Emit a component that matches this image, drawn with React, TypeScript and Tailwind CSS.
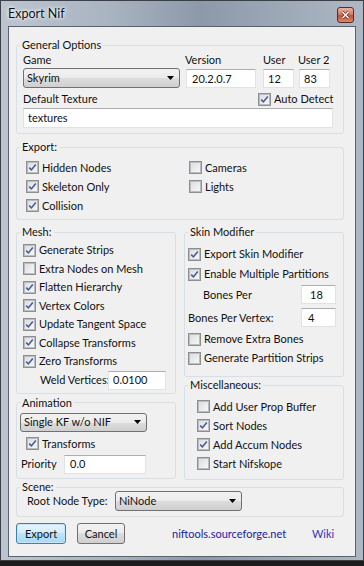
import React from "react";

function Box({ checked }: { checked?: boolean }) {
  return (
    <span className="flex h-[13px] w-[13px] shrink-0 items-center justify-center border border-[#8e8f8f] bg-white">
      <span className="flex h-[11px] w-[11px] items-center justify-center border border-[#b9bcc1] bg-[linear-gradient(135deg,#dcdee2,#f7f7f7)]">
        {checked ? (
          <svg width="9" height="9" viewBox="0 0 9 9">
            <path d="M1.2 4.6 L3.4 6.9 L7.8 1.4" fill="none" stroke="#4a5c94" strokeWidth="1.6" />
          </svg>
        ) : null}
      </span>
    </span>
  );
}

function Check({ checked, label, className = "" }: { checked?: boolean; label: string; className?: string }) {
  return (
    <div className={`flex items-center gap-[3px] ${className}`}>
      <Box checked={checked} />
      <span className="whitespace-nowrap">{label}</span>
    </div>
  );
}

function Combo({ value, className = "" }: { value: string; className?: string }) {
  return (
    <div
      className={`flex shrink-0 items-center justify-between rounded-[3px] border border-[#707070] bg-[linear-gradient(#f2f2f2,#ebebeb_50%,#dddddd_50%,#cfcfcf)] pl-[3px] pr-[5px] ${className}`}
    >
      <span className="whitespace-nowrap">{value}</span>
      <svg width="7" height="4" viewBox="0 0 7 4">
        <path d="M0 0H7L3.5 4Z" fill="#000" />
      </svg>
    </div>
  );
}

function Field({ value, className = "" }: { value: string; className?: string }) {
  return (
    <div
      className={`flex shrink-0 items-center border border-[#dfe3e8] border-t-[#abadb3] bg-white ${className}`}
    >
      {value}
    </div>
  );
}

function Group({
  label,
  className = "",
  inner = "",
  children,
}: {
  label: string;
  className?: string;
  inner?: string;
  children: React.ReactNode;
}) {
  return (
    <fieldset className={`rounded-[3px] border border-[#d5dfe5] ${className}`}>
      <legend className="ml-[3px] px-[2px] leading-[14px]">{label}</legend>
      <div className={inner}>{children}</div>
    </fieldset>
  );
}

export default function App() {
  return (
    <div className="h-[566px] w-[364px] bg-[#1c1c1c] font-[Lato,'Liberation_Sans',sans-serif] text-[11px] leading-[14px] text-[#111]">
      <div className="flex h-[561px] flex-col border border-[#3b4047] bg-[linear-gradient(90deg,#bcc5cf_0%,#a9b4c1_30%,#8c99a9_55%,#9eaab8_80%,#aeb8c4_100%)] px-[7px] pb-[3px]">
        <div className="flex h-[25px] shrink-0 items-center justify-between">
          <span className="text-[12.5px] [text-shadow:0_0_5px_#ffffff,0_0_3px_#ffffff]">Export Nif</span>
          <div className="mr-[2px] mt-[2px] flex h-[16px] w-[17px] items-center justify-center rounded-[3px] border border-[#5c2b22] bg-[linear-gradient(#eab0a2,#d47b66_45%,#c2503c_55%,#d88a6c)]">
            <svg width="9" height="8" viewBox="0 0 9 8">
              <path d="M1.5 1 L7.5 7 M7.5 1 L1.5 7" stroke="#5a1e16" strokeWidth="2.6" />
              <path d="M1.5 1 L7.5 7 M7.5 1 L1.5 7" stroke="#ffffff" strokeWidth="1.5" />
            </svg>
          </div>
        </div>

        <div className="flex flex-1 flex-col border border-[#59626d] bg-[#f0f0f0] pl-[7px] pt-[11px]">
          <Group label="General Options" className="w-[328px]" inner="pl-[6px] pr-[9px] pb-[5px]">
            <div className="flex h-[16px] items-center">
              <span className="w-[162px]">Game</span>
              <span className="w-[78px]">Version</span>
              <span className="w-[35px]">User</span>
              <span>User 2</span>
            </div>
            <div className="flex h-[20px] items-start">
              <Combo className="h-[20px] w-[157px]" value="Skyrim" />
              <Field className="ml-[6px] mt-[1px] h-[19px] w-[70px] pl-[5px]" value="20.2.0.7" />
              <Field className="ml-[7px] mt-[1px] h-[19px] w-[31px] pl-[4px]" value="12" />
              <Field className="ml-[5px] mt-[1px] h-[19px] w-[31px] pl-[4px]" value="83" />
            </div>
            <div className="mt-[4px] flex h-[14px] items-center">
              <span className="w-[235px]">Default Texture</span>
              <Check checked label="Auto Detect" />
            </div>
            <Field className="mt-[2px] h-[20px] w-[310px] pl-[4px]" value="textures" />
          </Group>

          <Group label="Export:" className="mt-[6px] w-[328px]" inner="pl-[9px] pt-[4px] pb-[4px]">
            <div className="flex h-[19px] items-center">
              <Check className="w-[163px]" checked label="Hidden Nodes" />
              <Check label="Cameras" />
            </div>
            <div className="flex h-[19px] items-center">
              <Check className="w-[163px]" checked label="Skeleton Only" />
              <Check label="Lights" />
            </div>
            <div className="flex h-[19px] items-center">
              <Check className="w-[163px]" checked label="Collision" />
            </div>
          </Group>

          <div className="mt-[5px] flex items-start gap-[8px]">
            <div className="flex w-[160px] flex-col">
              <Group label="Mesh:" className="w-[160px]" inner="pl-[6px] pt-[2px] pb-[3px]">
                <Check className="h-[18.5px]" checked label="Generate Strips" />
                <Check className="h-[18.5px]" label="Extra Nodes on Mesh" />
                <Check className="h-[18.5px]" checked label="Flatten Hierarchy" />
                <Check className="h-[18.5px]" checked label="Vertex Colors" />
                <Check className="h-[18.5px]" checked label="Update Tangent Space" />
                <Check className="h-[18.5px]" checked label="Collapse Transforms" />
                <Check className="h-[18.5px]" checked label="Zero Transforms" />
                <div className="flex h-[19px] items-center">
                  <span className="w-[85px] whitespace-nowrap pl-[17px]">Weld Vertices:</span>
                  <Field className="h-[19px] w-[58px] pl-[4px]" value="0.0100" />
                </div>
              </Group>
              <Group label="Animation" className="mt-[2px] w-[160px]" inner="pl-[3px] pb-[4px]">
                <Combo className="mt-[3px] h-[19px] w-[127px]" value="Single KF w/o NIF" />
                <Check className="mt-[3px] h-[18px] pl-[6px]" checked label="Transforms" />
                <div className="mt-[2px] flex h-[19px] items-center">
                  <span className="w-[44px] pl-[1px]">Priority</span>
                  <Field className="h-[19px] w-[82px] pl-[5px]" value="0.0" />
                </div>
              </Group>
            </div>

            <div className="flex w-[160px] flex-col">
              <Group label="Skin Modifier" className="w-[160px]" inner="pl-[3px] pb-[9px]">
                <Check className="mt-[6px] h-[18px]" checked label="Export Skin Modifier" />
                <Check className="mt-[2px] h-[18px]" checked label="Enable Multiple Partitions" />
                <div className="mt-[2px] flex h-[19px] items-center">
                  <span className="w-[113px] pl-[15px]">Bones Per</span>
                  <Field className="h-[19px] w-[35px] pl-[8px]" value="18" />
                </div>
                <div className="mt-[4px] flex h-[19px] items-center">
                  <span className="w-[113px] whitespace-nowrap">Bones Per Vertex:</span>
                  <Field className="h-[19px] w-[35px] pl-[6px]" value="4" />
                </div>
                <Check className="mt-[3px] h-[18px]" label="Remove Extra Bones" />
                <Check className="mt-[1px] h-[18px]" label="Generate Partition Strips" />
              </Group>
              <Group label="Miscellaneous:" className="mt-[1px] w-[160px]" inner="pl-[12px] pt-[5px] pb-[6px]">
                <Check className="h-[19px]" label="Add User Prop Buffer" />
                <Check className="h-[19px]" checked label="Sort Nodes" />
                <Check className="h-[19px]" checked label="Add Accum Nodes" />
                <Check className="h-[19px]" label="Start Nifskope" />
              </Group>
            </div>
          </div>

          <Group label="Scene:" className="w-[328px]" inner="-mt-[3px] flex items-center pl-[10px] pb-[5px]">
            <span className="w-[88px] whitespace-nowrap">Root Node Type:</span>
            <Combo className="h-[20px] w-[127px]" value="NiNode" />
          </Group>

          <div className="mt-[6px] flex h-[21px] items-center">
            <div className="flex h-[21px] w-[50px] items-center justify-center rounded-[3px] border border-[#3c7fb1] bg-[linear-gradient(#e5f4fc,#d3ecfa_50%,#bde3f8_50%,#a9d8f2)] shadow-[inset_0_0_0_1px_#c4e5f6]">
              Export
            </div>
            <div className="ml-[11px] flex h-[21px] w-[48px] items-center justify-center rounded-[3px] border border-[#707070] bg-[linear-gradient(#f2f2f2,#ebebeb_50%,#dddddd_50%,#cfcfcf)]">
              Cancel
            </div>
            <span className="ml-[47px] w-[140px] whitespace-nowrap text-[#22229e]">niftools.sourceforge.net</span>
            <span className="text-[#3434b4]">Wiki</span>
          </div>
        </div>
      </div>
    </div>
  );
}
